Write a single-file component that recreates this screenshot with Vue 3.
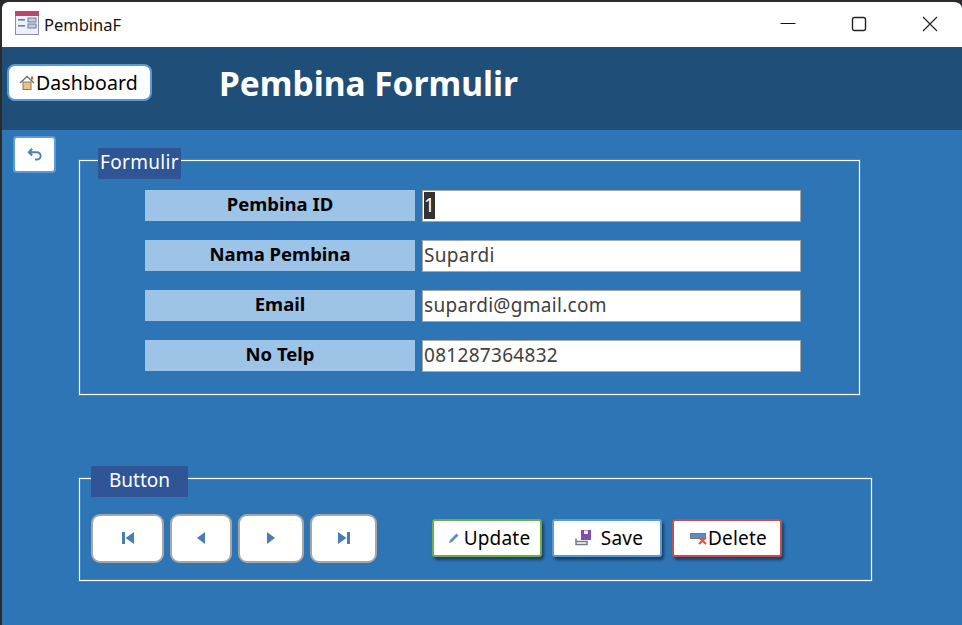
<script setup>
const rows = [
  { label: 'Pembina ID', value: '1', selected: true },
  { label: 'Nama Pembina', value: 'Supardi' },
  { label: 'Email', value: 'supardi@gmail.com' },
  { label: 'No Telp', value: '081287364832' },
]
</script>

<template>
  <div class="window">
    <div class="titlebar">
      <div class="title-left">
        <svg class="app-icon" width="24" height="24" viewBox="0 0 24 24">
          <rect x="0.5" y="0.5" width="23" height="23" fill="#eef0f8" stroke="#8b8fa8" />
          <rect x="0" y="0" width="24" height="5" fill="#b8476f" />
          <rect x="3" y="8" width="7" height="1.6" fill="#6f7f9c" />
          <rect x="3" y="14" width="7" height="1.6" fill="#6f7f9c" />
          <rect x="13" y="7" width="8" height="4" fill="#c5cde0" stroke="#6f7f9c" />
          <rect x="13" y="13" width="8" height="4" fill="#c5cde0" stroke="#6f7f9c" />
        </svg>
        <span class="app-name">PembinaF</span>
      </div>
      <div class="controls">
        <svg width="16" height="16" viewBox="0 0 16 16"><path d="M0.5 7.5H15.5" stroke="#111" fill="none" /></svg>
        <svg width="16" height="16" viewBox="0 0 16 16"><rect x="1.5" y="1.5" width="13" height="13" rx="2" stroke="#222" stroke-width="1.4" fill="none" /></svg>
        <svg width="16" height="16" viewBox="0 0 16 16"><path d="M1 1L15 15M15 1L1 15" stroke="#222" stroke-width="1.2" fill="none" /></svg>
      </div>
    </div>

    <header class="header">
      <button class="dash-btn">
        <svg width="16" height="16" viewBox="0 0 16 16">
          <rect x="4" y="7" width="8" height="7.5" fill="#eec27e" stroke="#7b7b7b" />
          <path d="M1 8L8 1.5L15 8" stroke="#6d6d6d" stroke-width="1.4" fill="none" />
          <rect x="12" y="1.5" width="2" height="3" fill="#d9512c" />
        </svg>
        <span>Dashboard</span>
      </button>
      <h1 class="page-title">Pembina Formulir</h1>
    </header>

    <main class="body">
      <button class="back-btn">
        <svg width="18" height="18" viewBox="0 0 16 16">
          <path d="M5.5 2.5L2.5 5.5L5.5 8.5M3 5.5H9.5C11.5 5.5 13 7 13 8.8C13 10.6 11.5 12 9.5 12H8" stroke="#4a82bd" stroke-width="1.8" fill="none" />
        </svg>
      </button>
      <div class="content">
        <section class="frame form-frame">
          <span class="legend legend-form">Formulir</span>
          <div v-for="row in rows" :key="row.label" class="row">
            <div class="label">{{ row.label }}</div>
            <div class="field"><span :class="{ selected: row.selected }">{{ row.value }}</span></div>
          </div>
        </section>

        <section class="frame button-frame">
          <span class="legend legend-button">Button</span>
          <div class="nav-group">
            <button class="nav nav-first">
              <svg width="14" height="14" viewBox="0 0 14 14"><path d="M1 1H4V13H1ZM4.500 7L13 1V13Z" fill="#4a7db5" /></svg>
            </button>
            <button class="nav nav-prev">
              <svg width="14" height="14" viewBox="0 0 14 14"><path d="M3 7L11 1V13Z" fill="#4a7db5" /></svg>
            </button>
            <button class="nav nav-next">
              <svg width="14" height="14" viewBox="0 0 14 14"><path d="M11 7L3 1V13Z" fill="#4a7db5" /></svg>
            </button>
            <button class="nav nav-last">
              <svg width="14" height="14" viewBox="0 0 14 14"><path d="M13 1H10V13H13ZM9.500 7L1 1V13Z" fill="#4a7db5" /></svg>
            </button>
          </div>
          <div class="action-group">
            <button class="action update">
              <svg width="12" height="12" viewBox="0 0 12 12"><path d="M1 11L2 8L8.500 1.500L10.500 3.500L4 10Z" fill="#5b8fc4" /></svg>
              <span>Update</span>
            </button>
            <button class="action save">
              <svg width="17" height="16" viewBox="0 0 17 16">
                <rect x="6" y="0" width="10" height="10" fill="#7d4fa8" />
                <rect x="9" y="0.500" width="4" height="3.500" fill="#eee" />
                <path d="M1 8.500V14.500H12V11.500H1" stroke="#6b7a8c" stroke-width="1.500" fill="#fff" />
              </svg>
              <span>Save</span>
            </button>
            <button class="action delete">
              <svg width="18" height="14" viewBox="0 0 18 14">
                <rect x="0.500" y="2.500" width="15" height="5" fill="#5b8fc4" stroke="#6b7a8c" />
                <path d="M9 6.500L16 13M16 6.500L9 13" stroke="#e0533c" stroke-width="2" fill="none" />
              </svg>
              <span>Delete</span>
            </button>
          </div>
        </section>
      </div>
    </main>
  </div>
</template>

<style>
html, body { margin: 0; background: #2b2b2b; }
</style>

<style scoped>
.window {
  width: 962px;
  height: 625px;
  box-sizing: border-box;
  border-top: 2px solid #2b2b2b;
  border-left: 2px solid #2b2b2b;
  display: flex;
  flex-direction: column;
  font-family: "Noto Sans", "Open Sans", sans-serif;
  background: #2e75b6;
  overflow: hidden;
  border-top-left-radius: 8px;
  border-top-right-radius: 8px;
}
.titlebar {
  height: 45px;
  flex: none;
  background: #fff;
  display: flex;
  align-items: center;
  justify-content: space-between;
  border-top-left-radius: 6px;
  border-top-right-radius: 6px;
}
.title-left { display: flex; align-items: center; gap: 5px; padding-left: 13px; }
.app-icon { display: block; margin-bottom: 3px; }
.app-name { font-size: 16.500px; color: #111; }
.controls { display: flex; align-items: center; gap: 55px; padding-right: 24px; margin-bottom: 1px; }
.controls svg { display: block; }
.header {
  height: 83px;
  flex: none;
  background: #1f4e79;
  display: flex;
  align-items: flex-start;
  padding-left: 5px;
}
.dash-btn {
  margin-top: 17px;
  width: 145px;
  height: 37px;
  box-sizing: border-box;
  background: #fff;
  border: 2px solid #5b9bd5;
  border-radius: 8px;
  display: flex;
  align-items: center;
  padding: 0 0 0 10px;
  font: 19.500px "Noto Sans", sans-serif;
  letter-spacing: 0.1px;
  color: #000;
}
.dash-btn svg { flex: none; margin-right: 1px; }
.page-title {
  margin: 12px 0 0 67px;
  font-size: 33.500px;
  line-height: 48px;
  font-weight: 700;
  color: #fff;
}
.body { flex: 1; display: grid; grid-template-columns: 77px 1fr; align-items: start; }
.back-btn {
  margin: 7px 0 0 12px;
  width: 41px;
  height: 35px;
  box-sizing: border-box;
  background: #fff;
  border: 1px solid #5b9bd5;
  border-radius: 3px;
  box-shadow: 0 0 0 1px #5b9bd5;
  padding: 0;
  display: flex;
  align-items: center;
  justify-content: center;
}
.content { padding-top: 30px; display: flex; flex-direction: column; gap: 83px; }
.frame {
  position: relative;
  box-sizing: border-box;
  border: 1px solid #fff;
  box-shadow: inset 0 0 0 1px rgba(255, 255, 255, 0.12), 0 0 0 1px rgba(255, 255, 255, 0.12);
}
.form-frame {
  width: 781px;
  height: 235px;
  padding: 29px 0 0 65px;
  display: flex;
  flex-direction: column;
  gap: 18px;
}
.button-frame {
  width: 793px;
  height: 103px;
  padding: 35px 0 0 11px;
  display: flex;
  align-items: flex-start;
}
.legend {
  position: absolute;
  height: 31px;
  background: #2f5597;
  color: #fff;
  font-size: 19px;
  line-height: 29px;
  text-align: center;
  letter-spacing: 0.3px;
}
.legend-form { left: 18px; top: -13px; width: 83px; }
.legend-button { left: 11px; top: -13px; width: 97px; letter-spacing: 0; }
.row { display: flex; gap: 7px; height: 32px; }
.label {
  width: 270px;
  height: 31px;
  background: #9dc3e6;
  color: #000;
  font-size: 18.500px;
  font-weight: 700;
  line-height: 27px;
  text-align: center;
}
.field {
  width: 379px;
  height: 32px;
  box-sizing: border-box;
  background: #fff;
  border: 1px solid #a6a6a6;
  padding: 1px 0 0 1px;
  font-size: 19px;
  line-height: 26px;
  letter-spacing: 0.300px;
  color: #404040;
}
.selected { display: inline-block; background: #333; color: #fff; height: 27px; }
.nav-group { display: flex; gap: 6px; }
.nav {
  height: 49px;
  box-sizing: border-box;
  background: #fff;
  border: 2px solid #a6a6a6;
  border-radius: 9px;
  padding: 0;
  display: flex;
  align-items: center;
  justify-content: center;
}
.nav svg { margin-bottom: 2px; }
.nav-first { width: 73px; }
.nav-prev { width: 62px; }
.nav-next { width: 66px; }
.nav-last { width: 67px; }
.action-group { display: flex; gap: 10px; margin: 5px 0 0 55px; }
.action {
  width: 110px;
  height: 38px;
  box-sizing: border-box;
  background: #fff;
  border-radius: 3px;
  border: 2px solid;
  box-shadow: 2px 3px 3px rgba(20, 40, 70, 0.7);
  display: flex;
  align-items: center;
  justify-content: center;
  padding: 0;
  font: 19px "Noto Sans", sans-serif;
  letter-spacing: 0.2px;
  color: #000;
}
.update { border-color: #70ad47; gap: 4px; padding-left: 4px; }
.save { border-color: #5b9bd5; gap: 9px; padding-left: 4px; }
.delete { border-color: #c0504d; padding-left: 3px; }
</style>
